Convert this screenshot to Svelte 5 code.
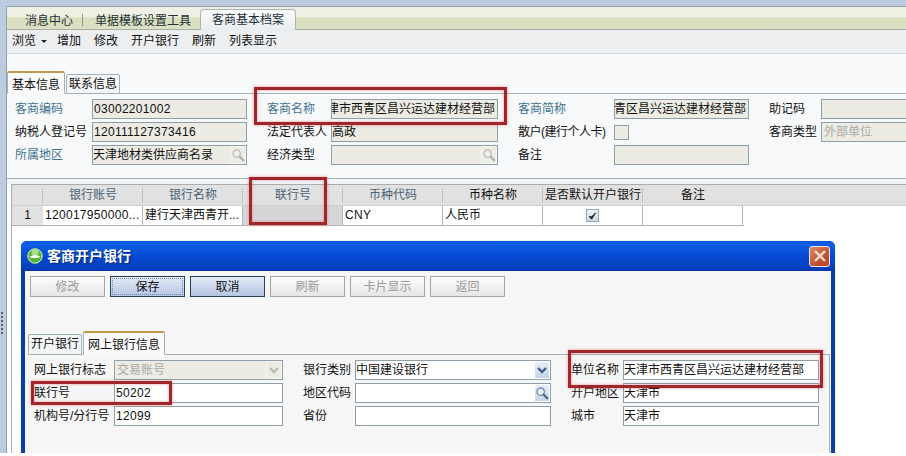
<script>
  const toolbar = ['增加', '修改', '开户银行', '刷新', '列表显示'];
  const columns = [
    ['银行账号', true], ['银行名称', true], ['联行号', true], ['币种代码', true],
    ['币种名称', false], ['是否默认开户银行', false], ['备注', false]
  ];
  const buttons = [
    ['修改', ''], ['保存', 'focus'], ['取消', 'on'], ['刷新', ''], ['卡片显示', ''], ['返回', '']
  ];
</script>

{#snippet glass(faded)}
  <svg class:faded class="glass" viewBox="0 0 16 16" width="16" height="16">
    <circle cx="6.5" cy="6.5" r="4.2" fill="#e8f0f8" stroke="#6f8fb0" stroke-width="1.6" />
    <path d="M10 10l4 4" stroke="#4f6680" stroke-width="2.6" stroke-linecap="round" />
  </svg>
{/snippet}

<div class="app">
  <div class="banner"></div>
  <div class="work">
    <div class="splitter"><span class="grip"></span></div>
    <div class="main">
      <div class="tabbar">
        <span class="ttab first">消息中心</span>
        <span class="ttab second">单据模板设置工具</span>
        <span class="ttab active">客商基本档案</span>
      </div>
      <div class="toolbar">
        <span class="browse">浏览<i class="caret"></i></span>
        {#each toolbar as t}<span>{t}</span>{/each}
      </div>

      <section class="archive">
        <div class="tabs">
          <span class="tab sel">基本信息</span>
          <span class="tab">联系信息</span>
        </div>
        <div class="form top">
          <span class="link">客商编码</span>
          <div class="field off num">03002201002</div>
          <i></i>
          <span class="link">客商名称</span>
          <div class="field off end"><span>天津市西青区昌兴运达建材经营部</span></div>
          <i></i>
          <span class="link">客商简称</span>
          <div class="field off end"><span>天津市西青区昌兴运达建材经营部</span></div>
          <i></i>
          <span>助记码</span>
          <div class="field off"></div>

          <span>纳税人登记号</span>
          <div class="field off num">120111127373416</div>
          <i></i>
          <span>法定代表人</span>
          <div class="field off">高政</div>
          <i></i>
          <span class="tight">散户(建行个人卡)</span>
          <div class="checkcell"><span class="check"></span></div>
          <i></i>
          <span>客商类型</span>
          <div class="field off grey">外部单位</div>

          <span class="link">所属地区</span>
          <div class="field off">天津地材类供应商名录<b class="iconbtn pale">{@render glass(true)}</b></div>
          <i></i>
          <span>经济类型</span>
          <div class="field off"><b class="iconbtn pale">{@render glass(true)}</b></div>
          <i></i>
          <span>备注</span>
          <div class="field off"></div>
        </div>
      </section>

      <div class="strip"></div>

      <section class="listing">
        <div class="grid head">
          <span class="c rn"></span>
          {#each columns as [name, muted]}<span class="c" class:muted>{name}</span>{/each}
        </div>
        <div class="grid row">
          <span class="c rn">1</span>
          <span class="c l num">120017950000...</span>
          <span class="c l">建行天津西青开...</span>
          <span class="c gray"></span>
          <span class="c l num">CNY</span>
          <span class="c l">人民币</span>
          <span class="c"><span class="tick"><svg viewBox="0 0 12 12" width="12" height="12"><path d="M2.5 6.5l2.5 3 4.5-7-4.4 4.4z" fill="#222" stroke="#222" stroke-width="1" /></svg></span></span>
          <span class="c"></span>
        </div>
      </section>
    </div>
  </div>

  <div class="dialog">
    <div class="title">
      <svg viewBox="0 0 16 16" width="16" height="16">
        <circle cx="8" cy="8" r="7.5" fill="#58b23c" />
        <circle cx="8" cy="4.5" r="3.6" fill="#a8dc8c" />
        <circle cx="8" cy="8" r="7.2" fill="none" stroke="#cfeebd" stroke-width="1" />
        <path d="M2.5 9c3-2.4 8-2.4 11 0-3 1.4-8 1.4-11 0z" fill="#fff" />
      </svg>
      <span class="caption">客商开户银行</span>
      <b class="close">
        <svg viewBox="0 0 14 14" width="14" height="14"><path d="M2 2l10 10M12 2L2 12" stroke="#f8dfd0" stroke-width="2.4" /></svg>
      </b>
    </div>
    <div class="body">
      <div class="btns">
        {#each buttons as [label, kind]}
          <span class="btn {kind}">{#if kind === 'focus'}<em>{label}</em>{:else}{label}{/if}</span>
        {/each}
      </div>
      <div class="tabs inner">
        <span class="tab">开户银行</span>
        <span class="tab sel">网上银行信息</span>
      </div>
      <div class="form bank">
        <span>网上银行标志</span>
        <div class="field off grey">交易账号<b class="iconbtn pale"><svg viewBox="0 0 12 12" width="12" height="12"><path d="M2 4l4 4 4-4" fill="none" stroke="#b5b8b5" stroke-width="2.4" /></svg></b></div>
        <i></i>
        <span>银行类别</span>
        <div class="field">中国建设银行<b class="iconbtn"><svg viewBox="0 0 12 12" width="12" height="12"><path d="M2 4l4 4 4-4" fill="none" stroke="#3b5f8f" stroke-width="2.4" /></svg></b></div>
        <i></i>
        <span>单位名称</span>
        <div class="field">天津市西青区昌兴运达建材经营部</div>

        <span>联行号</span>
        <div class="field num">50202</div>
        <i></i>
        <span>地区代码</span>
        <div class="field"><b class="iconbtn">{@render glass(false)}</b></div>
        <i></i>
        <span>开户地区</span>
        <div class="field">天津市</div>

        <span>机构号/分行号</span>
        <div class="field num">12099</div>
        <i></i>
        <span>省份</span>
        <div class="field"></div>
        <i></i>
        <span>城市</span>
        <div class="field">天津市</div>
      </div>
    </div>
  </div>

  <div class="mark m1"></div>
  <div class="mark m2"></div>
  <div class="mark m3"></div>
  <div class="mark m4"></div>
</div>

<style>
  :global(body) { margin: 0; background: #fff; }
  * { box-sizing: border-box; }
  .app {
    position: relative; width: 906px; height: 453px; overflow: hidden;
    display: flex; flex-direction: column; background: #fff; color: #111;
    font: 12px/21px "Liberation Sans", "Noto Sans CJK SC", "Noto Sans CJK JP", sans-serif;
  }
  .banner { height: 6px; flex: none; background: #bccbde; }
  .work { flex: 1; display: flex; min-height: 0; }
  .splitter { width: 7px; flex: none; background: #bccbde; border-right: 1px solid #8f9faf; position: relative; }
  .grip { position: absolute; left: 1px; top: 306px; height: 22px; width: 3px; border-left: 2px dotted #56606a; }
  .main { flex: 1; min-width: 0; display: flex; flex-direction: column; }

  .tabbar {
    height: 24px; flex: none; display: flex; align-items: flex-end;
    border-top: 1px solid #98a4ac; border-bottom: 1px solid #a9aea6;
    background: linear-gradient(#f0f1e6 0, #eef0e2 45%, #d9dfbd 50%, #dce1c4 100%);
  }
  .ttab { height: 16px; line-height: 16px; color: #24303a; }
  .first { margin-left: 18px; padding-right: 10px; position: relative; }
  .first::after { content: ""; position: absolute; right: 0; top: 1px; height: 12px; width: 1px; background: #8c9488; }
  .second { margin-left: 12px; }
  .active {
    margin: 0 0 -1px 9px; width: 96px; height: 21px; line-height: 21px; text-align: center;
    background: linear-gradient(#fbfcfc, #e9edf0); border: 1px solid #a9b3b8; border-bottom: 0;
    border-radius: 4px 4px 0 0;
  }
  .toolbar {
    height: 24px; flex: none; display: flex; gap: 13px; padding-left: 5px; line-height: 23px;
    background: #eceef0; border-bottom: 1px solid #d8dbde; box-shadow: 0 1px 0 #fff;
  }
  .browse { display: flex; align-items: center; width: 32px; flex: none; white-space: nowrap; }
  .caret { flex: none; margin-left: 5px; border: 3px solid transparent; border-top: 3px solid #222; border-bottom: 0; }

  .archive { flex: none; height: 125px; background: #f8f9fa; padding-top: 17px; border-bottom: 1px solid #a6b2b8; }
  .tabs { display: flex; align-items: flex-end; height: 23px; border-bottom: 1px solid #a3b1b9; gap: 1px; }
  .tab {
    height: 20px; line-height: 19px; padding: 0 2px; margin-bottom: -1px; background: #f3f5f6;
    border: 1px solid #a3b1b9; border-radius: 2px 2px 0 0;
  }
  .tab.sel {
    height: 23px; line-height: 24px; background: #fbfbfb; border-top: 2px solid #c09a48; border-bottom-color: #fbfbfb;
    padding: 0 4px;
  }
  .form { display: grid; grid-auto-rows: 20px; row-gap: 3px; white-space: nowrap; }
  .form > i { display: block; }
  .top {
    padding: 5px 0 0 8px;
    grid-template-columns: 77px 155px 20px 64px 167px 20px 96px 135px 20px 52px 100px;
  }
  .link { color: #3e7391; }
  .tight { letter-spacing: -0.5px; }
  .field {
    position: relative; height: 20px; line-height: 19px; padding: 0 2px 0 0; overflow: hidden;
    background: #fff; border: 1px solid #8e9fa8;
  }
  .field.off { background: #ecece5; }
  .grey { color: #a8aaa6; padding-left: 2px; }
  .num { letter-spacing: .3px; padding-left: 1px; }
  .end { display: flex; justify-content: flex-end; }
  .end span { flex: none; }
  .checkcell { display: flex; align-items: center; }
  .check { width: 15px; height: 15px; background: #ecece5; border: 1px solid #8e9fa8; }
  .iconbtn {
    position: absolute; right: 0; top: 0; width: 16px; height: 18px;
    display: flex; align-items: center; justify-content: center;
    background: linear-gradient(#e8eef6, #c5d4ea); border: 1px solid #fff;
  }
  .iconbtn.pale { background: #ecece5; border-color: #f6f6f2; }
  .glass.faded { opacity: .45; filter: grayscale(1); }

  .strip { height: 5px; flex: none; background: linear-gradient(#f4f7fb, #f0f5fa); }
  .listing { flex: 1; margin-left: 4px; border-left: 1px solid #a6b2b8; background: #fff; }
  .grid { display: grid; grid-template-columns: 31px repeat(7, 100px) 1fr; }
  .head { height: 22px; background: #e1e1e1; border-top: 1px solid #a9adb0; border-bottom: 1px solid #cfcfcf; }
  .head .c { text-align: center; line-height: 21px; position: relative; }
  .head .c:not(:nth-last-child(1))::after { content: ""; position: absolute; right: 0; top: 3px; bottom: 3px; width: 1px; background: #c2c2c2; }
  .head .c:nth-child(8)::after { top: 0; bottom: 0; background: #b6b6b6; }
  .muted { color: #4c6272; }
  .row { height: 20px; grid-template-columns: 31px repeat(7, 100px); width: 732px; border-bottom: 1px solid #b5b5b5; }
  .row .c { border-right: 1px solid #b5b5b5; text-align: center; line-height: 19px; height: 19px; overflow: hidden; }
  .row .c.l { text-align: left; padding-left: 2px; }
  .row .rn { background: #e1e1e1; border-right: 0; }
  .row .gray { background: #d6d6d8; }
  .tick {
    display: inline-flex; width: 13px; height: 13px; margin-top: 3px; vertical-align: top;
    background: linear-gradient(#f0f4f8, #c9d6e2); border: 1px solid #9aa8b3;
    align-items: center; justify-content: center;
  }

  .dialog {
    position: absolute; left: 21px; top: 241px; width: 814px; height: 212px;
    display: flex; flex-direction: column; border-radius: 6px 6px 0 0; overflow: hidden;
    background: #0a3da6; box-shadow: 0 0 3px #d6e6f2;
  }
  .title {
    height: 30px; flex: none; display: flex; align-items: center; gap: 4px; padding: 0 6px;
    color: #fff; font-size: 14px; font-weight: 700; text-shadow: 1px 1px 1px #0a2a78;
    background: linear-gradient(#0a55d8 0, #0f5fe6 10%, #0548d0 55%, #0440bc 92%, #04379e 100%);
  }
  .caption { padding-top: 1px; }
  .close {
    margin-left: auto; margin-right: -1px; width: 21px; height: 21px; display: flex;
    align-items: center; justify-content: center; border: 1px solid #f2e4de; border-radius: 3px;
    background: linear-gradient(135deg, #dd8a68, #bc4a2c 70%);
  }
  .body { flex: 1; min-height: 0; margin: 0 4px; background: #f6f6f6; padding: 5px 0 0 3px; display: flex; flex-direction: column; }
  .btns { display: flex; gap: 5px; padding-left: 2px; }
  .btn {
    width: 75px; height: 21px; line-height: 20px; text-align: center; color: #9a9a9a;
    border: 1px solid #a6a6a6; background: linear-gradient(#fcfcfc, #e6e6e6);
  }
  .btn.on, .btn.focus { color: #111; border-color: #26405f; background: linear-gradient(#e6ecf8, #b4c4e2); }
  .btn em {
    display: block; font-style: normal; margin: 1px; height: 17px; line-height: 17px;
    border: 1px dotted #6f8bb8;
  }
  .inner { flex: none; margin-top: 34px; height: 24px; margin-right: 1px; }
  .inner .tab { height: 21px; }
  .inner .tab.sel { height: 24px; }
  .bank {
    flex: 1; padding: 5px 0 0 6px; border-right: 1px solid #a3b1b9;
    margin-right: 1px; align-content: start;
    grid-template-columns: 80px 169px 20px 52px 196px 20px 52px 196px;
  }

  .mark {
    position: absolute; border: 3px solid #a0262c; pointer-events: none;
    box-shadow: 0 0 3px rgba(226, 70, 70, .55), inset 0 0 3px rgba(226, 70, 70, .55);
  }
  .m1 { left: 254px; top: 87px; width: 253px; height: 38px; }
  .m2 { left: 249px; top: 177px; width: 78px; height: 48px; }
  .m3 { left: 568px; top: 350px; width: 255px; height: 38px; }
  .m4 { left: 31px; top: 381px; width: 141px; height: 24px; }
</style>
